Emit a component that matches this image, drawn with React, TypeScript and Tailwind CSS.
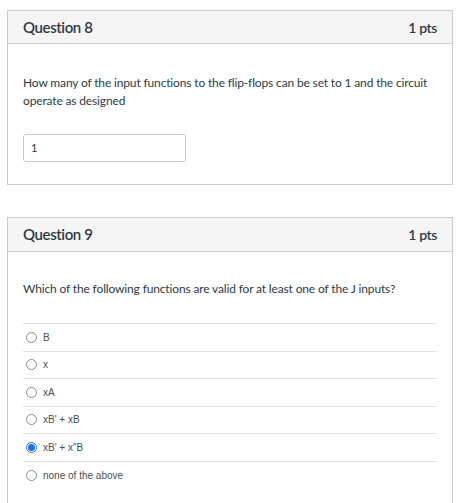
import React from "react";

const options = ["B", "x", "xA", "xB' + xB", "xB' + x\"B", "none of the above"];

function Radio({ checked }: { checked?: boolean }) {
  return checked ? (
    <span className="w-[11px] h-[11px] rounded-full border border-[#2a76d2] bg-white flex items-center justify-center shrink-0">
      <span className="w-[7px] h-[7px] rounded-full bg-[#1a73e8]" />
    </span>
  ) : (
    <span className="w-[11px] h-[11px] rounded-full border border-[#8a8f94] bg-white shrink-0" />
  );
}

export default function App() {
  return (
    <div className="w-[474px] h-[503px] overflow-hidden bg-white text-[#2d3b45] font-['Lato','Open_Sans',sans-serif] pt-[10px] pl-[7px]">
      {/* Question 8 */}
      <div className="w-[446px] border border-[#c7cdd1]">
        <div className="h-[33px] bg-[#f5f5f5] border-b border-[#c7cdd1] flex items-center justify-between px-[15px]">
          <span className="text-[15px] font-semibold tracking-[-0.4px]">Question 8</span>
          <span className="text-[14px] font-semibold tracking-[-0.4px]">1 pts</span>
        </div>
        <div className="px-[15px] pt-[30px] pb-[22px]">
          <p className="text-[12px] leading-[18px] tracking-[-0.15px]">
            How many of the input functions to the flip-flops can be set to 1 and the circuit operate as designed
          </p>
          <div className="mt-[24px] w-[163px] h-[28px] border border-[#c7cdd1] rounded-[3px] flex items-center px-[7px] text-[11px]">
            1
          </div>
        </div>
      </div>

      {/* Question 9 */}
      <div className="w-[446px] border border-[#c7cdd1] mt-[32px] h-[300px]">
        <div className="h-[34px] bg-[#f5f5f5] border-b border-[#c7cdd1] flex items-center justify-between px-[15px]">
          <span className="text-[15px] font-semibold tracking-[-0.4px]">Question 9</span>
          <span className="text-[14px] font-semibold tracking-[-0.4px]">1 pts</span>
        </div>
        <div className="px-[15px] pt-[28px]">
          <p className="text-[12px] leading-[18px] tracking-[-0.15px]">
            Which of the following functions are valid for at least one of the J inputs?
          </p>
          <div className="mt-[25px] border-t border-[#e3e5e7]">
            {options.map((o, i) => (
              <div
                key={o}
                className={`h-[27.5px] flex items-center gap-[6px] pl-[3px] text-[10px] font-['Liberation_Sans',sans-serif] text-[#4a4f54] ${
                  i < options.length - 1 ? "border-b border-[#e3e5e7]" : ""
                }`}
              >
                <Radio checked={i === 4} />
                <span>{o}</span>
              </div>
            ))}
          </div>
        </div>
      </div>
    </div>
  );
}
